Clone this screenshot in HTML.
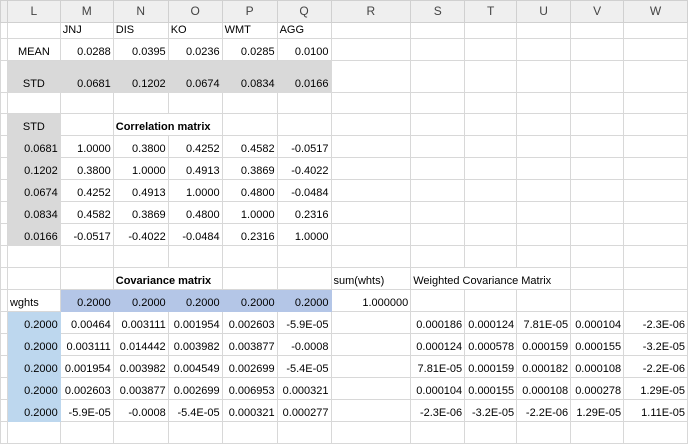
<!DOCTYPE html>
<html><head><style>
body{margin:0;width:688px;height:442px;overflow:hidden;background:#fff;font-family:"Liberation Sans",Arial,sans-serif;font-size:11px;color:#000}
table{border-collapse:collapse;table-layout:fixed;position:absolute;left:0;top:0}
td{border:1px solid #d8d8d8;padding:0 2px 1px 2px;white-space:nowrap;overflow:visible;vertical-align:bottom;text-align:right;line-height:13px}
tr.h td{background:#efefef;text-align:center;color:#444;font-size:12px;vertical-align:middle;border-color:#d0d0d0}
.l{text-align:left}.c{text-align:center}.b{font-weight:bold}
.g{background:#d9d9d9;border-color:#d9d9d9}
.bl{background:#b4c6e7;border-color:#b4c6e7}
.lb{background:#bdd7ee;border-color:#bdd7ee}
td.s{border-left:none;border-right:none}
</style></head><body>
<table>
<colgroup><col style="width:7px"><col style="width:53px"><col style="width:53px"><col style="width:55px"><col style="width:54px"><col style="width:55px"><col style="width:54px"><col style="width:80px"><col style="width:54px"><col style="width:52px"><col style="width:54px"><col style="width:53px"><col style="width:64px"></colgroup>
<tr class="h" style="height:22px"><td></td><td>L</td><td>M</td><td>N</td><td>O</td><td>P</td><td>Q</td><td>R</td><td>S</td><td>T</td><td>U</td><td>V</td><td>W</td></tr>
<tr style="height:16px"><td></td><td></td><td class="l">JNJ</td><td class="l">DIS</td><td class="l">KO</td><td class="l">WMT</td><td class="l">AGG</td><td></td><td></td><td></td><td></td><td></td><td></td></tr>
<tr style="height:22px"><td></td><td class="c">MEAN</td><td>0.0288</td><td>0.0395</td><td>0.0236</td><td>0.0285</td><td>0.0100</td><td></td><td></td><td></td><td></td><td></td><td></td></tr>
<tr style="height:32px"><td></td><td class="c g">STD</td><td class="g">0.0681</td><td class="g">0.1202</td><td class="g">0.0674</td><td class="g">0.0834</td><td class="g">0.0166</td><td></td><td></td><td></td><td></td><td></td><td></td></tr>
<tr style="height:21px"><td></td><td></td><td></td><td></td><td></td><td></td><td></td><td></td><td></td><td></td><td></td><td></td><td></td></tr>
<tr style="height:22px"><td></td><td class="c g">STD</td><td></td><td class="l b" colspan="2">Correlation matrix</td><td></td><td></td><td></td><td></td><td></td><td></td><td></td><td></td></tr>
<tr style="height:22px"><td></td><td class="g">0.0681</td><td>1.0000</td><td>0.3800</td><td>0.4252</td><td>0.4582</td><td>-0.0517</td><td></td><td></td><td></td><td></td><td></td><td></td></tr>
<tr style="height:22px"><td></td><td class="g">0.1202</td><td>0.3800</td><td>1.0000</td><td>0.4913</td><td>0.3869</td><td>-0.4022</td><td></td><td></td><td></td><td></td><td></td><td></td></tr>
<tr style="height:22px"><td></td><td class="g">0.0674</td><td>0.4252</td><td>0.4913</td><td>1.0000</td><td>0.4800</td><td>-0.0484</td><td></td><td></td><td></td><td></td><td></td><td></td></tr>
<tr style="height:22px"><td></td><td class="g">0.0834</td><td>0.4582</td><td>0.3869</td><td>0.4800</td><td>1.0000</td><td>0.2316</td><td></td><td></td><td></td><td></td><td></td><td></td></tr>
<tr style="height:22px"><td></td><td class="g">0.0166</td><td>-0.0517</td><td>-0.4022</td><td>-0.0484</td><td>0.2316</td><td>1.0000</td><td></td><td></td><td></td><td></td><td></td><td></td></tr>
<tr style="height:22px"><td></td><td></td><td></td><td></td><td></td><td></td><td></td><td></td><td></td><td></td><td></td><td></td><td></td></tr>
<tr style="height:22px"><td></td><td></td><td></td><td class="l b" colspan="2">Covariance matrix</td><td></td><td></td><td class="l">sum(whts)</td><td class="l" colspan="3">Weighted Covariance Matrix</td><td></td><td></td></tr>
<tr style="height:22px"><td></td><td class="l">wghts</td><td class="bl">0.2000</td><td class="bl">0.2000</td><td class="bl">0.2000</td><td class="bl">0.2000</td><td class="bl">0.2000</td><td>1.000000</td><td></td><td></td><td></td><td></td><td></td></tr>
<tr style="height:22px"><td></td><td class="lb">0.2000</td><td>0.00464</td><td>0.003111</td><td>0.001954</td><td>0.002603</td><td>-5.9E-05</td><td></td><td>0.000186</td><td>0.000124</td><td>7.81E-05</td><td>0.000104</td><td>-2.3E-06</td></tr>
<tr style="height:22px"><td></td><td class="lb">0.2000</td><td>0.003111</td><td>0.014442</td><td>0.003982</td><td>0.003877</td><td>-0.0008</td><td></td><td>0.000124</td><td>0.000578</td><td>0.000159</td><td>0.000155</td><td>-3.2E-05</td></tr>
<tr style="height:22px"><td></td><td class="lb">0.2000</td><td>0.001954</td><td>0.003982</td><td>0.004549</td><td>0.002699</td><td>-5.4E-05</td><td></td><td>7.81E-05</td><td>0.000159</td><td>0.000182</td><td>0.000108</td><td>-2.2E-06</td></tr>
<tr style="height:22px"><td></td><td class="lb">0.2000</td><td>0.002603</td><td>0.003877</td><td>0.002699</td><td>0.006953</td><td>0.000321</td><td></td><td>0.000104</td><td>0.000155</td><td>0.000108</td><td>0.000278</td><td>1.29E-05</td></tr>
<tr style="height:22px"><td></td><td class="lb">0.2000</td><td>-5.9E-05</td><td>-0.0008</td><td>-5.4E-05</td><td>0.000321</td><td>0.000277</td><td></td><td>-2.3E-06</td><td>-3.2E-05</td><td>-2.2E-06</td><td>1.29E-05</td><td>1.11E-05</td></tr>
<tr style="height:22px"><td></td><td></td><td></td><td></td><td></td><td></td><td></td><td></td><td></td><td></td><td></td><td></td><td></td></tr>
</table>
</body></html>
